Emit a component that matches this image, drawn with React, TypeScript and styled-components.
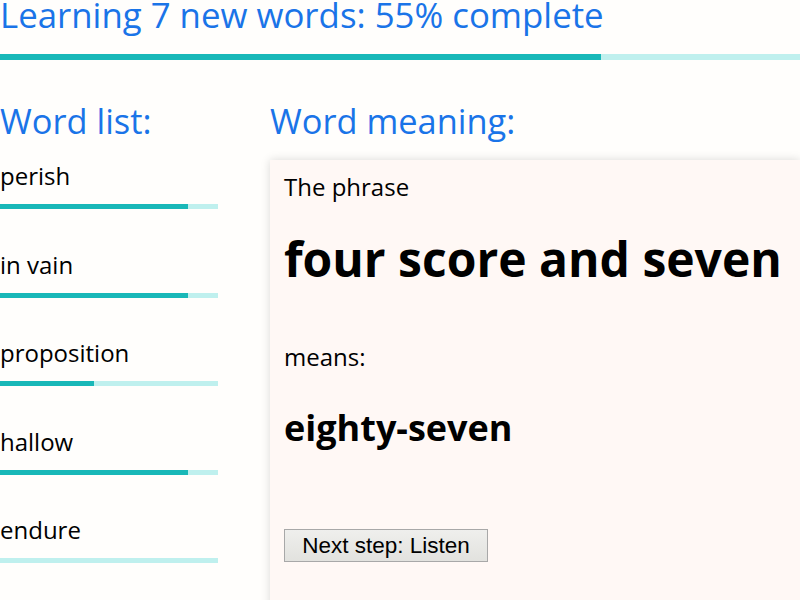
import React from 'react'
import styled, { createGlobalStyle } from 'styled-components'

const words = [
  { word: 'perish', progress: 188 / 218 },
  { word: 'in vain', progress: 188 / 218 },
  { word: 'proposition', progress: 94 / 218 },
  { word: 'hallow', progress: 188 / 218 },
  { word: 'endure', progress: 0 },
]

const GlobalStyle = createGlobalStyle`
  html, body {
    margin: 0;
    padding: 0;
    background: #fffefc;
    font-family: 'Open Sans', 'Noto Sans', sans-serif;
    overflow: hidden;
  }
`

export default function App() {
  return (
    <Page>
      <GlobalStyle />
      <Title>Learning 7 new words: 55% complete</Title>
      <Bar $height={6}>
        <Fill style={{ width: '75.1%' }} />
      </Bar>
      <Columns>
        <Sidebar>
          <Heading>Word list:</Heading>
          <WordList>
            {words.map((w) => (
              <WordItem key={w.word}>
                <WordLabel>{w.word}</WordLabel>
                <Bar $height={5}>
                  <Fill style={{ width: `${w.progress * 100}%` }} />
                </Bar>
              </WordItem>
            ))}
          </WordList>
        </Sidebar>
        <Main>
          <Heading>Word meaning:</Heading>
          <Card>
            <Plain>The phrase</Plain>
            <Phrase>four score and seven</Phrase>
            <Plain $gap={50}>means:</Plain>
            <Meaning>eighty-seven</Meaning>
            <NextButton>Next step: Listen</NextButton>
          </Card>
        </Main>
      </Columns>
    </Page>
  )
}

const Page = styled.div`
  width: 800px;
  height: 600px;
  overflow: hidden;
`

const Title = styled.h1`
  margin: 0;
  font-size: 34.8px;
  font-weight: 400;
  line-height: 29px;
  white-space: nowrap;
  color: #1a74e8;
  padding: 0 0 25px;
`

const Bar = styled.div<{ $height: number }>`
  height: ${(p) => p.$height}px;
  background: #bff0ee;
  display: flex;
`

const Fill = styled.div`
  background: #19b8b8;
  height: 100%;
`

const Columns = styled.div`
  display: grid;
  grid-template-columns: 218px 1fr;
  column-gap: 52px;
  padding-top: 38px;
`

const Sidebar = styled.div`
  display: flex;
  flex-direction: column;
`

const Main = styled.div`
  display: flex;
  flex-direction: column;
`

const Heading = styled.h2`
  margin: 0;
  font-size: 34.4px;
  font-weight: 400;
  line-height: 46px;
  white-space: nowrap;
  color: #1a74e8;
`

const WordList = styled.ul`
  list-style: none;
  margin: 0;
  padding: 16px 0 0;
  display: flex;
  flex-direction: column;
  gap: 39.5px;
`

const WordItem = styled.li`
  display: flex;
  flex-direction: column;
  gap: 12px;
`

const WordLabel = styled.span`
  font-size: 24px;
  line-height: 32px;
  color: #000;
`

const Card = styled.div`
  margin-top: 16px;
  background: #fff8f5;
  box-shadow: 0 0 9px rgba(0, 0, 0, 0.15);
  padding: 11px 14px 60px;
  display: flex;
  flex-direction: column;
  align-items: flex-start;
`

const Plain = styled.p<{ $gap?: number }>`
  margin: ${(p) => p.$gap ?? 0}px 0 0;
  font-size: 24px;
  line-height: 32px;
  color: #000;
`

const Phrase = styled.p`
  margin: 24px 0 0;
  font-size: 48px;
  font-weight: 700;
  line-height: 64px;
  white-space: nowrap;
  color: #000;
`

const Meaning = styled.p`
  margin: 31px 0 0;
  font-size: 36px;
  font-weight: 700;
  line-height: 48px;
  color: #000;
`

const NextButton = styled.button`
  margin-top: 77px;
  font-family: 'Liberation Sans', Arial, sans-serif;
  font-size: 22.5px;
  color: #000;
  padding: 0;
  height: 33px;
  width: 204px;
  background: linear-gradient(#efefed, #e2e2de);
  border: 1px solid #a8a8a8;
  border-radius: 0;
`
